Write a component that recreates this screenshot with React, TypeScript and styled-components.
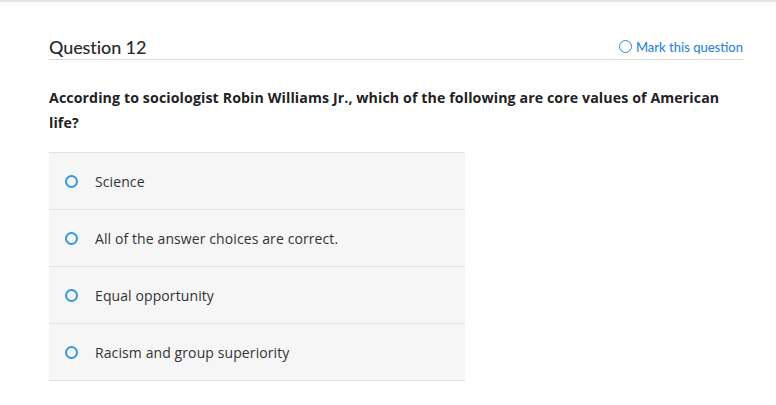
import React from "react";
import styled, { createGlobalStyle } from "styled-components";

const Global = createGlobalStyle`
  html, body { margin: 0; padding: 0; background: #fff; }
  body { font-family: Lato, "Open Sans", "Liberation Sans", sans-serif; color: #222; }
`;

const TopBar = styled.div`
  height: 2px;
  background: #e4e4e4;
  box-shadow: 0 1px 4px rgba(0,0,0,0.06);
`;

const Page = styled.div`
  padding: 32px 33px 0 49px;
  width: 694px;
`;

const Header = styled.div`
  display: flex;
  align-items: center;
  justify-content: space-between;
  height: 25px;
  border-bottom: 1px solid #dcdcdc;
`;

const Title = styled.h2`
  margin: 0;
  font-size: 18px;
  font-weight: 500;
  color: #2a2a2a;
  letter-spacing: -0.1px;
`;

const Mark = styled.button`
  display: flex;
  align-items: center;
  gap: 4px;
  border: 0;
  background: none;
  padding: 0;
  font-family: inherit;
  font-size: 13px;
  font-weight: 500;
  color: #2f86d6;
  cursor: pointer;
`;

const MarkCircle = styled.span`
  width: 11px;
  height: 11px;
  border: 1.3px solid #3a86cc;
  border-radius: 50%;
`;

const Prompt = styled.p`
  margin: 25px 0 17px;
  font-family: "Open Sans", Lato, sans-serif;
  font-size: 14.2px;
  font-weight: 700;
  line-height: 25px;
  color: #222;
  letter-spacing: 0.1px;
`;

const Options = styled.div`
  width: 416px;
  display: flex;
  flex-direction: column;
  background: #f6f6f6;
  border-bottom: 1px solid #e1e1e1;
`;

const Option = styled.label`
  display: flex;
  align-items: center;
  gap: 17px;
  height: 56px;
  padding-left: 16px;
  border-top: 1px solid #e1e1e1;
  font-family: "Open Sans", Lato, sans-serif;
  font-size: 14px;
  letter-spacing: 0.1px;
  color: #333;
  cursor: pointer;
`;

const Radio = styled.span`
  width: 9px;
  height: 9px;
  border: 2.5px solid #3598dc;
  border-radius: 50%;
  flex: none;
`;

const choices = [
  "Science",
  "All of the answer choices are correct.",
  "Equal opportunity",
  "Racism and group superiority",
];

export default function App() {
  return (
    <>
      <Global />
      <TopBar />
      <Page>
        <Header>
          <Title>Question 12</Title>
          <Mark>
            <MarkCircle />
            Mark this question
          </Mark>
        </Header>
        <Prompt>
          According to sociologist Robin Williams Jr., which of the following are core values of American life?
        </Prompt>
        <Options>
          {choices.map((c) => (
            <Option key={c}>
              <Radio />
              {c}
            </Option>
          ))}
        </Options>
      </Page>
    </>
  );
}
